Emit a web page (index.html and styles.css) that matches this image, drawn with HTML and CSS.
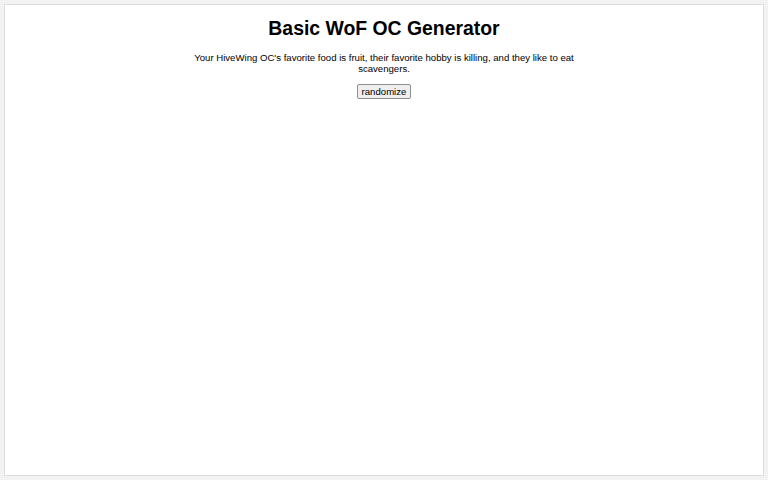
FILE: index.html
```html
<!DOCTYPE html>
<html lang="en">
<head>
    <meta charset="UTF-8">
    <meta name="viewport" content="width=device-width, initial-scale=1.0">
    <title>Basic WoF OC Generator</title>
    <link rel="stylesheet" href="styles.css">
</head>
<body>
    <div class="container">
        <h1>Basic WoF OC Generator</h1>
        <p id="result">Your HiveWing OC's favorite food is fruit, their favorite hobby is killing, and they like to eat scavengers.</p>
        <button id="randomize">randomize</button>
    </div>
</body>
</html>
```

FILE: styles.css
```css
html, body {
    height: 100%;
}

body {
    font-family: "Liberation Sans", Arial, sans-serif;
    margin: 0;
    padding: 4px;
    box-sizing: border-box;
    background-color: #f2f2f2;
}

.container {
    background-color: #fff;
    border: 1px solid #dcdcdc;
    height: 100%;
    box-sizing: border-box;
    text-align: center;
    padding-top: 12px;
}

h1 {
    font-size: 19.4px;
    margin: 0 0 12px;
}

p {
    font-size: 9.6px;
    line-height: 11px;
    max-width: 400px;
    margin: 0 auto 7px;
}

button {
    font-family: inherit;
    font-size: 9.6px;
    padding: 1px 4px;
    background-color: #efefef;
    border: 1px solid #8f8f8f;
    border-radius: 2px;
    color: #000;
}
```
